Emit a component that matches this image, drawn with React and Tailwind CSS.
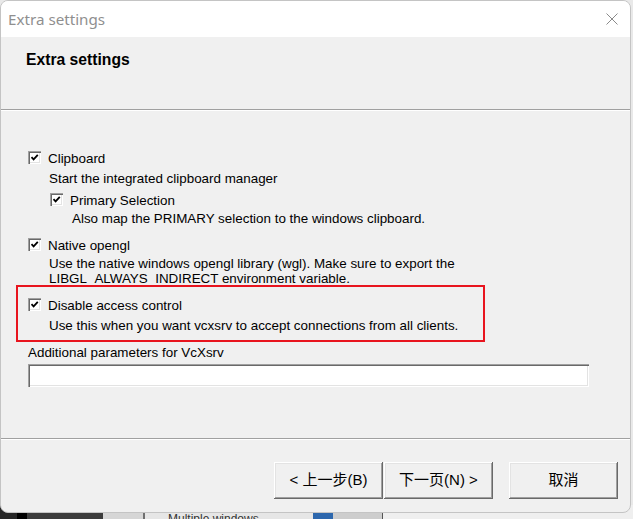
import React from 'react';

const sans = { fontFamily: '"Liberation Sans", Arial, sans-serif' };
const cjk = { fontFamily: '"Liberation Sans", "Noto Sans CJK SC", sans-serif' };

// classic win32 sunken box (checkbox / edit)
const sunken =
  'bg-white shadow-[inset_1px_1px_#a0a0a0,inset_2px_2px_#696969,inset_-1px_-1px_#ffffff,inset_-2px_-2px_#e3e3e3]';

const raised =
  'bg-[#f0f0f0] shadow-[inset_-1px_-1px_#696969,inset_1px_1px_#ffffff,inset_-2px_-2px_#a0a0a0,inset_2px_2px_#e3e3e3]';

function Check({ label, className = '' }) {
  return (
    <div className={`flex items-start h-[15px] leading-[15px] ${className}`}>
      <span className={`w-[13px] h-[13px] shrink-0 flex items-center justify-center ${sunken}`}>
        <svg width="9" height="9" viewBox="0 0 9 9">
          <path d="M1.5 4.2 L3.6 6.4 L7.8 1.8" stroke="#000" strokeWidth="1.8" fill="none" />
        </svg>
      </span>
      <span className="ml-[7px] text-[13.4px] text-black">{label}</span>
    </div>
  );
}

function Desc({ children, className = '' }) {
  return <div className={`text-[13.4px] leading-[15px] text-black whitespace-nowrap ${className}`}>{children}</div>;
}

function Button({ children, className = '' }) {
  return (
    <div
      className={`w-[109px] h-[37px] flex items-center justify-center text-[15px] text-black ${raised} ${className}`}
      style={cjk}
    >
      {children}
    </div>
  );
}

export default function App() {
  return (
    <div className="relative w-[633px] h-[519px] overflow-hidden bg-[#e9e9e9] flex flex-col" style={sans}>
      {/* dialog window */}
      <div className="relative z-10 w-[631px] h-[513px] shrink-0 rounded-lg border border-[#c4c4c4] bg-[#f0f0f0] flex flex-col overflow-hidden">
        {/* title bar */}
        <div className="h-[36px] shrink-0 bg-white flex items-center justify-between pl-[7px] pr-[12px]">
          <span className="text-[15.2px] text-[#8f8f8f]" style={{ fontFamily: '"Noto Sans", sans-serif' }}>
            Extra settings
          </span>
          <svg width="12" height="12" viewBox="0 0 12 12">
            <path d="M0.5 0.5 L11.5 11.5 M11.5 0.5 L0.5 11.5" stroke="#8a8a8a" strokeWidth="1" />
          </svg>
        </div>

        {/* header */}
        <div className="h-[72px] shrink-0 pl-[25px] pt-[14px]">
          <div className="text-[15.7px] font-bold text-black leading-[18px]">Extra settings</div>
        </div>
        <div className="h-px bg-[#a0a0a0]" />
        <div className="h-px bg-white" />

        {/* page content */}
        <div className="h-[327px] shrink-0 pl-[27px] pr-[42px] pt-[40px]">
          <Check label="Clipboard" />
          <Desc className="ml-[21px] mt-[5px]">Start the integrated clipboard manager</Desc>
          <Check label="Primary Selection" className="ml-[22px] mt-[7px]" />
          <Desc className="ml-[44px] mt-[3px]">Also map the PRIMARY selection to the windows clipboard.</Desc>
          <Check label="Native opengl" className="mt-[12px]" />
          <div className="ml-[21px] mt-[3px] h-[30px] overflow-hidden">
            <Desc>Use the native windows opengl library (wgl). Make sure to export the</Desc>
            <Desc>LIBGL_ALWAYS_INDIRECT environment variable.</Desc>
          </div>
          <Check label="Disable access control" className="mt-[12px]" />
          <Desc className="ml-[21px] mt-[5px]">Use this when you want vcxsrv to accept connections from all clients.</Desc>
          <Desc className="mt-[12px]">Additional parameters for VcXsrv</Desc>
          <div className={`mt-[4px] w-[561px] h-[23px] ${sunken}`} />
        </div>
        <div className="h-px bg-[#a0a0a0]" />
        <div className="h-px bg-white" />

        {/* footer buttons */}
        <div className="flex-1 flex justify-end items-start pt-[22px] pr-[12px]">
          <Button>&lt; 上一步(B)</Button>
          <Button className="ml-px">下一页(N) &gt;</Button>
          <Button className="ml-[16px]">取消</Button>
        </div>
      </div>

      {/* annotation */}
      <div className="absolute z-20 left-[16px] top-[285px] w-[469px] h-[57px] border-2 border-[#e8141e]" />

      {/* other windows behind the dialog */}
      <div className="-mt-[8px] h-[14px] flex shrink-0 text-[12px] leading-[14px]">
        <div className="w-[17px] bg-[#262626]" />
        <div className="w-[10px] bg-black" />
        <div className="w-[76px] bg-[#3b3b3b]" />
        <div className="w-[40px] bg-[#d6d6d6]" />
        <div className="w-[2px] bg-[#707070]" />
        <div className="w-[168px] bg-[#e6e6e6] pl-[23px] pt-[7px] text-[#333] overflow-hidden whitespace-nowrap">
          Multiple windows
        </div>
        <div className="w-[20px] bg-[#2d67ad]" />
        <div className="w-[49px] bg-[#cdcdcd]" />
        <div className="w-px bg-[#555]" />
        <div className="flex-1 bg-[#efefef]" />
      </div>
    </div>
  );
}
